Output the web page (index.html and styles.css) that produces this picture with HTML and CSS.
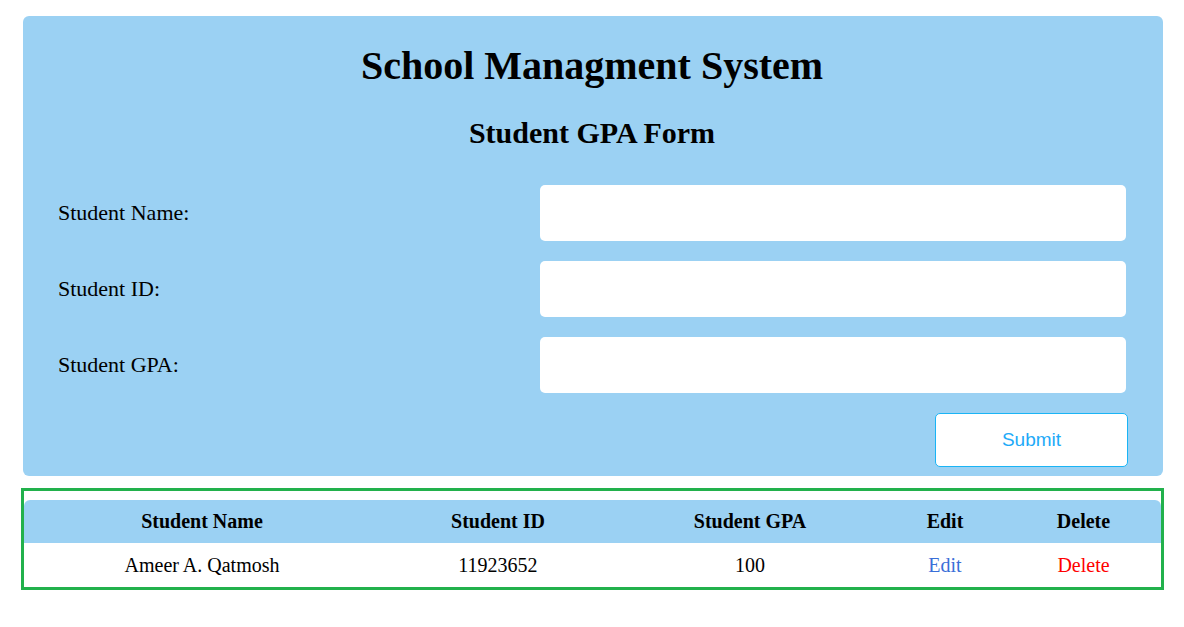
FILE: index.html
```html
<!DOCTYPE html>
<html>
<head>
<meta charset="utf-8">
<link rel="stylesheet" href="styles.css">
</head>
<body>
<div class="page">
  <div class="card">
    <h1 class="title">School Managment System</h1>
    <h2 class="subtitle">Student GPA Form</h2>
    <form class="form">
      <div class="row">
        <label class="label">Student Name:</label>
        <input class="input" type="text">
      </div>
      <div class="row">
        <label class="label">Student ID:</label>
        <input class="input" type="text">
      </div>
      <div class="row">
        <label class="label">Student GPA:</label>
        <input class="input" type="text">
      </div>
      <div class="actions">
        <button class="submit" type="button">Submit</button>
      </div>
    </form>
  </div>
  <div class="table-wrap">
    <table class="table">
      <colgroup>
        <col class="c1"><col class="c2"><col class="c3"><col class="c4"><col class="c5">
      </colgroup>
      <thead>
        <tr>
          <th>Student Name</th>
          <th>Student ID</th>
          <th>Student GPA</th>
          <th>Edit</th>
          <th>Delete</th>
        </tr>
      </thead>
      <tbody>
        <tr>
          <td>Ameer A. Qatmosh</td>
          <td>11923652</td>
          <td>100</td>
          <td><a class="edit" href="#">Edit</a></td>
          <td><a class="delete" href="#">Delete</a></td>
        </tr>
      </tbody>
    </table>
  </div>
</div>
</body>
</html>
```

FILE: styles.css
```css
* { box-sizing: border-box; }
html, body { margin: 0; padding: 0; background: #fff; }
body { font-family: "Liberation Serif", "Times New Roman", serif; color: #000; }

.page { padding: 16px 20px 0 21px; }

.card {
  margin: 0 1px 0 2px;
  background: #9bd1f3;
  border-radius: 6px;
  padding: 26px 37px 9px 35px;
}

.title {
  margin: 0;
  text-align: center;
  font-size: 40px;
  line-height: 48px;
  font-weight: bold;
}

.subtitle {
  margin: 25px 0 0;
  text-align: center;
  font-size: 30px;
  line-height: 36px;
  font-weight: bold;
}

.form { margin-top: 34px; display: flex; flex-direction: column; gap: 20px; }

.row {
  display: grid;
  grid-template-columns: 1fr 586px;
  align-items: center;
}

.label { font-size: 22px; }

.input {
  height: 56px;
  border: none;
  border-radius: 5px;
  background: #fff;
  font-size: 18px;
  padding: 0 12px;
}

.actions { display: flex; justify-content: flex-end; margin-right: -2px; }

.submit {
  width: 193px;
  height: 54px;
  background: #fff;
  border: 1px solid #1ab4f5;
  border-radius: 5px;
  color: #1eaaf8;
  font-family: "Liberation Sans", Arial, sans-serif;
  font-size: 19px;
}

.table-wrap {
  margin-top: 12px;
  border: 3px solid #22b14c;
  padding-top: 9px;
}

.table {
  width: 100%;
  border-collapse: collapse;
  table-layout: fixed;
  font-size: 20px;
}

.c1 { width: 356px; }
.c2 { width: 236px; }
.c3 { width: 268px; }
.c4 { width: 122px; }
.c5 { width: 155px; }

.table th {
  background: #9bd1f3;
  height: 43px;
  font-weight: bold;
  text-align: center;
  padding: 0;
}
.table thead th:first-child { border-top-left-radius: 6px; }
.table thead th:last-child { border-top-right-radius: 6px; }

.table td {
  height: 44px;
  text-align: center;
  padding: 0;
}

.edit { color: #3a6fd8; text-decoration: none; }
.delete { color: #ff0000; text-decoration: none; }
```
